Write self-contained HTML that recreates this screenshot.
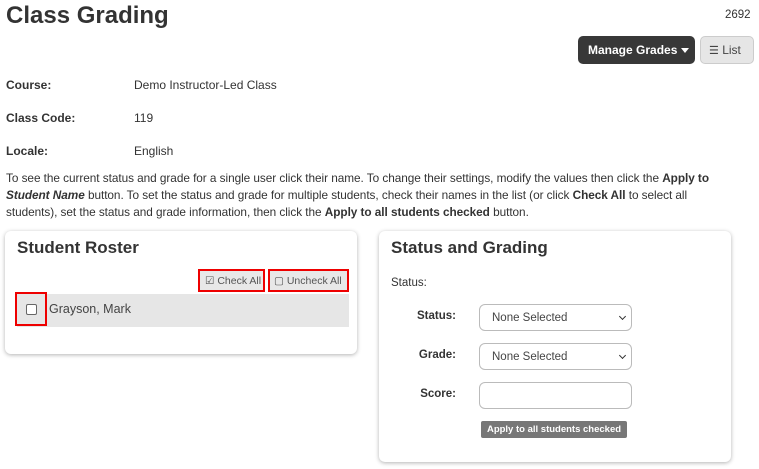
<!DOCTYPE html>
<html><head><meta charset="utf-8"><style>
*{box-sizing:border-box;margin:0;padding:0}
body{width:759px;height:469px;background:#fff;font-family:"Liberation Sans",sans-serif;color:#333;position:relative;overflow:hidden;font-size:12px}
.a{position:absolute;white-space:nowrap}
b{font-weight:bold}
.card{position:absolute;background:#fff;border-radius:6px;box-shadow:0 1px 4px rgba(0,0,0,.3)}
.sel{position:absolute;left:479px;width:153px;height:27px;border:1px solid #bbb;border-radius:6px;font-size:11.5px;padding:7px 12px;color:#444}
.sel:after{content:"";position:absolute;right:6px;top:9px;width:4px;height:4px;border-right:1.5px solid #333;border-bottom:1.5px solid #333;transform:rotate(45deg)}
.sel.n:after{display:none}
.lbl{position:absolute;width:70px;left:386px;text-align:right;font-weight:bold;font-size:11.5px}
</style></head><body>
<div class="a" style="left:6px;top:2px;font-size:24px;font-weight:bold;color:#333">Class Grading</div>
<div class="a" style="left:725px;top:9px;font-size:11.5px">2692</div>
<div class="a" style="left:578px;top:36px;width:117px;height:28px;background:#383838;border-radius:5px;color:#fff;font-weight:bold;font-size:12px;padding:7px 0 0 10px">Manage Grades <span style="display:inline-block;border-left:4px solid transparent;border-right:4px solid transparent;border-top:5px solid #fff;vertical-align:middle"></span></div>
<div class="a" style="left:700px;top:36px;width:54px;height:28px;background:#e6e6e6;border:1px solid #ccc;border-radius:5px;color:#444;font-size:12px;padding:6px 0 0 8px"><span style="font-size:11px">☰</span> List</div>
<div class="a" style="left:6px;top:78px;font-weight:bold;font-size:12px">Course:</div>
<div class="a" style="left:134px;top:78px;font-size:12px">Demo Instructor-Led Class</div>
<div class="a" style="left:6px;top:111px;font-weight:bold;font-size:12px">Class Code:</div>
<div class="a" style="left:134px;top:111px;font-size:12px">119</div>
<div class="a" style="left:6px;top:144px;font-weight:bold;font-size:12px">Locale:</div>
<div class="a" style="left:134px;top:144px;font-size:12px">English</div>
<div class="a" style="left:6px;top:170px;font-size:11.8px;line-height:17px;letter-spacing:-0.05px">To see the current status and grade for a single user click their name. To change their settings, modify the values then click the <b>Apply to</b><br><b><i>Student Name</i></b> button. To set the status and grade for multiple students, check their names in the list (or click <b>Check All</b> to select all<br>students), set the status and grade information, then click the <b>Apply to all students checked</b> button.</div>
<div class="card" style="left:5px;top:231px;width:352px;height:123px"></div>
<div class="a" style="left:17px;top:238px;font-size:17px;font-weight:bold">Student Roster</div>
<div class="a" style="left:198px;top:269px;width:67px;height:23px;border:2px solid #e00;background:#e8e8e8;font-size:10.5px;color:#555;padding:4px 0 0 5px">☑ Check All</div>
<div class="a" style="left:268px;top:269px;width:81px;height:23px;border:2px solid #e00;background:#e8e8e8;font-size:10.5px;color:#555;padding:4px 0 0 4px">▢ Uncheck All</div>
<div class="a" style="left:17px;top:294px;width:332px;height:33px;background:#e6e6e6"></div>
<div class="a" style="left:15px;top:292px;width:32px;height:34px;border:2px solid #e00"></div>
<div class="a" style="left:26px;top:304px;width:11px;height:11px;border:1px solid #666;border-radius:2px;background:#fff"></div>
<div class="a" style="left:49px;top:302px;font-size:12.5px;color:#444">Grayson, Mark</div>
<div class="card" style="left:379px;top:231px;width:352px;height:231px"></div>
<div class="a" style="left:391px;top:238px;font-size:17px;font-weight:bold">Status and Grading</div>
<div class="a" style="left:391px;top:277px;font-size:11.5px">Status:</div>
<div class="lbl" style="top:310px">Status:</div>
<div class="sel" style="top:304px">None Selected</div>
<div class="lbl" style="top:349px">Grade:</div>
<div class="sel" style="top:343px">None Selected</div>
<div class="lbl" style="top:388px">Score:</div>
<div class="sel n" style="top:382px;padding:0"></div>
<div class="a" style="left:481px;top:421px;width:146px;height:17px;background:#777;border-radius:2px;color:#fff;font-weight:bold;font-size:9.5px;text-align:center;padding-top:3px">Apply to all students checked</div>
</body></html>
